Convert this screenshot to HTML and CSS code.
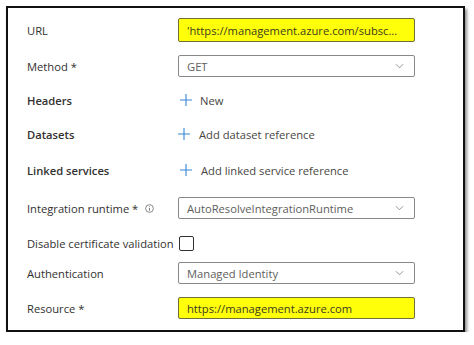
FILE: index.html
```html
<!DOCTYPE html>
<html>
<head>
<meta charset="utf-8">
<link rel="stylesheet" href="styles.css">
</head>
<body>
<div class="frame">
  <div class="row r1">
    <div class="label">URL</div>
    <div class="field input hl">'https://management.azure.com/subsc...</div>
  </div>
  <div class="row r2">
    <div class="label">Method *</div>
    <div class="field select"><span>GET</span><svg class="chev" viewBox="0 0 10 6" width="9" height="6"><path d="M1 1 L5 5 L9 1" fill="none" stroke="#8a8886" stroke-width="1"/></svg></div>
  </div>
  <div class="row r3">
    <div class="label strong">Headers</div>
    <div class="add add-new"><svg class="plus" viewBox="0 0 12 12" width="12" height="12"><path d="M6 0 V12 M0 6 H12" stroke="#3a86d6" stroke-width="1.1"/></svg><span>New</span></div>
  </div>
  <div class="row r4">
    <div class="label strong">Datasets</div>
    <div class="add add-ds"><svg class="plus" viewBox="0 0 12 12" width="12" height="12"><path d="M6 0 V12 M0 6 H12" stroke="#3a86d6" stroke-width="1.1"/></svg><span>Add dataset reference</span></div>
  </div>
  <div class="row r5">
    <div class="label strong">Linked services</div>
    <div class="add add-ls"><svg class="plus" viewBox="0 0 12 12" width="12" height="12"><path d="M6 0 V12 M0 6 H12" stroke="#3a86d6" stroke-width="1.1"/></svg><span>Add linked service reference</span></div>
  </div>
  <div class="row r6">
    <div class="label">Integration runtime *<svg class="info" viewBox="0 0 10 10" width="9" height="9"><circle cx="5" cy="5" r="4.3" fill="none" stroke="#605e5c" stroke-width="0.8"/><path d="M5 4.3 V7.5" stroke="#605e5c" stroke-width="0.9"/><circle cx="5" cy="2.8" r="0.55" fill="#605e5c"/></svg></div>
    <div class="field select"><span>AutoResolveIntegrationRuntime</span><svg class="chev" viewBox="0 0 10 6" width="9" height="6"><path d="M1 1 L5 5 L9 1" fill="none" stroke="#8a8886" stroke-width="1"/></svg></div>
  </div>
  <div class="row r7">
    <div class="label">Disable certificate validation</div>
    <div class="checkbox"></div>
  </div>
  <div class="row r8">
    <div class="label">Authentication</div>
    <div class="field select"><span>Managed Identity</span><svg class="chev" viewBox="0 0 10 6" width="9" height="6"><path d="M1 1 L5 5 L9 1" fill="none" stroke="#8a8886" stroke-width="1"/></svg></div>
  </div>
  <div class="row r9">
    <div class="label">Resource *</div>
    <div class="field input hl">https://management.azure.com</div>
  </div>
</div>
</body>
</html>
```

FILE: styles.css
```css
html, body {
  margin: 0;
  padding: 0;
  background: #ffffff;
}
body {
  font-family: "Open Sans", "Noto Sans", sans-serif;
  font-size: 11.2px;
  color: #323130;
}
.frame {
  margin: 6px 0 0 6px;
  width: 459px;
  height: 326px;
  border: 2px solid #111;
  box-shadow: 2px 3px 3px rgba(0,0,0,0.45);
  box-sizing: border-box;
  display: flex;
  flex-direction: column;
  padding-top: 10px;
}
.row {
  display: flex;
  align-items: center;
  height: 22px;
  padding-left: 19px;
}
.r1 { height: 24px; margin-top: 0; }
.r2 { margin-top: 13px; }
.r3 { margin-top: 12px; }
.r4 { margin-top: 12px; }
.r5 { margin-top: 14px; }
.r6 { margin-top: 16px; }
.r7 { margin-top: 13px; }
.r8 { margin-top: 8px; }
.r9 { margin-top: 13px; }
.label {
  width: 151px;
  flex: none;
  display: flex;
  align-items: center;
  white-space: nowrap;
}
.label.strong { font-weight: 600; }
.info { margin-left: 7px; }
.field {
  width: 237px;
  height: 100%;
  box-sizing: border-box;
  border: 1px solid #8a8886;
  border-radius: 2px;
  display: flex;
  align-items: center;
  padding: 0 8px;
  color: #605e5c;
  white-space: nowrap;
  overflow: hidden;
}
.input.hl {
  background: #ffff0a;
  border-color: #6f6f3a;
  color: #3b3a22;
}
.select {
  justify-content: space-between;
  padding-right: 10px;
}
.chev { flex: none; }
.add {
  display: flex;
  align-items: center;
  color: #484644;
}
.add .plus { flex: none; }
.add-new { margin-left: 2px; }
.add-new span { margin-left: 8px; }
.add-ds { margin-left: 0; }
.add-ds span { margin-left: 9px; }
.add-ls { margin-left: 2px; }
.add-ls span { margin-left: 9px; }
.checkbox {
  width: 15px;
  height: 15px;
  box-sizing: border-box;
  border: 1px solid #323130;
  border-radius: 2px;
  margin-left: 1px;
}
```
